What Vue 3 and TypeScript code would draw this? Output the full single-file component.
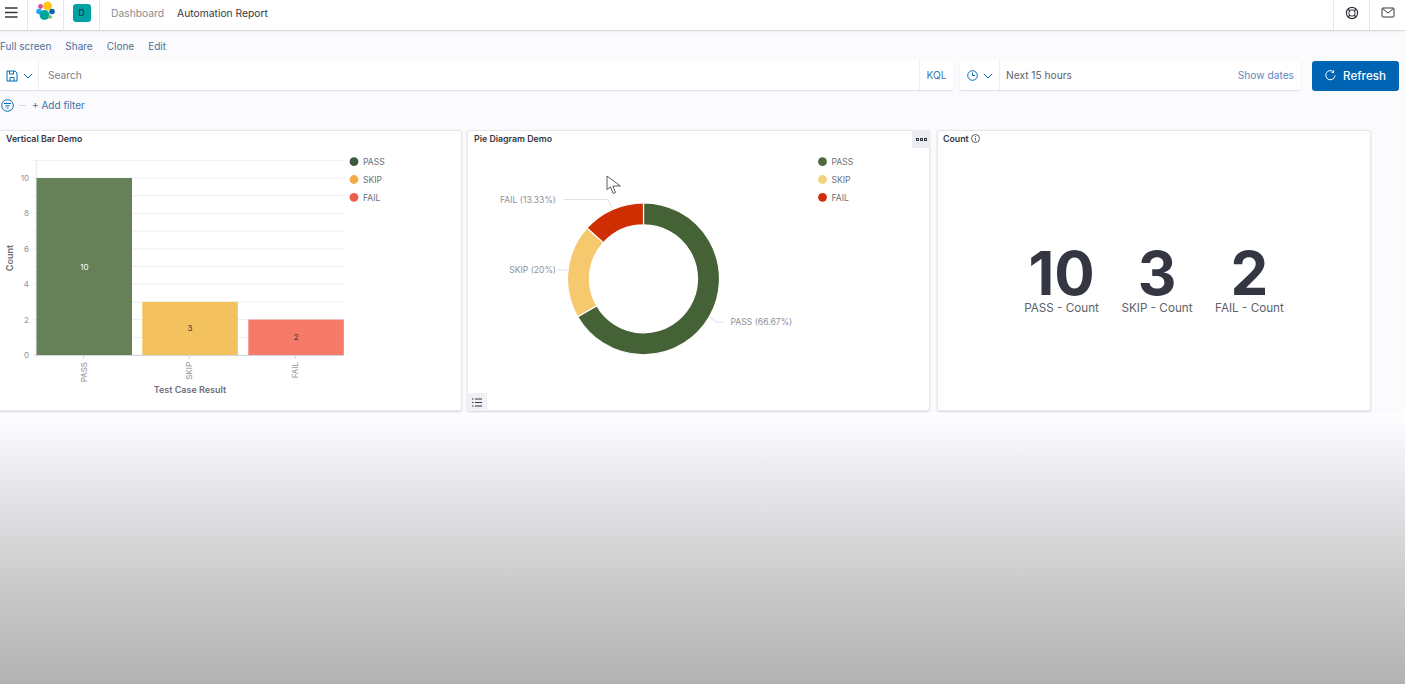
<script setup lang="ts">
const gridYs = Array.from({ length: 12 }, (_, i) => 355 - i * 17.7);
const ticks = [0, 2, 4, 6, 8, 10];

const bars = [
  { label: 'PASS', value: 10, x: 36.5, color: '#668058', text: '#ffffff' },
  { label: 'SKIP', value: 3, x: 142.3, color: '#f4c15f', text: '#343741' },
  { label: 'FAIL', value: 2, x: 248.3, color: '#f67a68', text: '#343741' },
];

const barLegend = [
  { label: 'PASS', color: '#3f5a3c' },
  { label: 'SKIP', color: '#f5ab45' },
  { label: 'FAIL', color: '#ec5f4f' },
];

const pieLegend = [
  { label: 'PASS', color: '#4e6840' },
  { label: 'SKIP', color: '#f3d27a' },
  { label: 'FAIL', color: '#cf2e08' },
];

const cx = 643.5;
const cy = 278.8;
const outer = 76;
const inner = 54;

const point = (r: number, a: number) => {
  const rad = (a * Math.PI) / 180;
  return `${(cx + r * Math.sin(rad)).toFixed(2)} ${(cy - r * Math.cos(rad)).toFixed(2)}`;
};

const slice = (from: number, to: number) => {
  const big = to - from > 180 ? 1 : 0;
  return `M${point(outer, from)} A${outer} ${outer} 0 ${big} 1 ${point(outer, to)} L${point(inner, to)} A${inner} ${inner} 0 ${big} 0 ${point(inner, from)} Z`;
};

const slices = [
  { d: slice(0, 240), color: '#446235' },
  { d: slice(240, 312), color: '#f6c96f' },
  { d: slice(312, 360), color: '#cf2e03' },
];

const metrics = [
  { value: '10', label: 'PASS - Count' },
  { value: '3', label: 'SKIP - Count' },
  { value: '2', label: 'FAIL - Count' },
];
</script>

<template>
  <div class="page">
    <header class="top-bar">
      <div class="cell menu-cell">
        <svg width="13" height="11" viewBox="0 0 13 11"><path d="M0 1h12.5M0 5.5h12.5M0 10h12.5" stroke="#343741" stroke-width="1.4" /></svg>
      </div>
      <div class="cell logo-cell">
        <svg width="24" height="24" viewBox="0 0 24 24">
          <circle cx="6.5" cy="5.5" r="2.4" fill="#e8478b" />
          <circle cx="13.5" cy="5" r="4.4" fill="#fec514" />
          <circle cx="5" cy="10.5" r="2.8" fill="#1ba9f5" />
          <circle cx="10.5" cy="14" r="5" fill="#00a69b" />
          <circle cx="18" cy="10.5" r="2.8" fill="#0b64a5" />
          <circle cx="16.2" cy="16" r="1.8" fill="#7dba5c" />
        </svg>
      </div>
      <div class="cell avatar-cell"><span class="avatar">D</span></div>
      <nav class="crumbs">
        <span class="crumb-link">Dashboard</span>
        <span class="crumb-current">Automation Report</span>
      </nav>
      <div class="cell right-cell">
        <svg width="14" height="14" viewBox="0 0 14 14" fill="none" stroke="#343741">
          <circle cx="7" cy="7" r="5.6" stroke-width="1.2" />
          <circle cx="7" cy="7" r="3.2" stroke-width="1" />
          <path d="M3 3l2 2M11 3L9 5M3 11l2-2M11 11L9 9" stroke-width="1.2" />
        </svg>
      </div>
      <div class="cell right-cell">
        <svg width="14" height="11" viewBox="0 0 14 11" fill="none" stroke="#343741"><rect x="1" y="1" width="12" height="9" rx="1" /><path d="M1.5 1.5L7 6l5.5-4.5" /></svg>
      </div>
    </header>

    <div class="actions">
      <a>Full screen</a>
      <a>Share</a>
      <a>Clone</a>
      <a>Edit</a>
    </div>

    <div class="query-row">
      <div class="search-box">
        <div class="saved-btn">
          <svg width="12" height="12" viewBox="0 0 12 12" fill="none" stroke="#006bb4"><path d="M1 1h8l2 2v8H1z" /><path d="M3.5 1v3h4V1M4 11V7.5h4V11" /></svg>
          <svg width="10" height="6" viewBox="0 0 10 6" fill="none" stroke="#006bb4"><path d="M.8.8L5 5l4.2-4.2" /></svg>
        </div>
        <span class="search-text">Search</span>
        <span class="kql">KQL</span>
      </div>
      <div class="date-box">
        <div class="clock-btn">
          <svg width="11" height="11" viewBox="0 0 11 11" fill="none" stroke="#006bb4"><circle cx="5.5" cy="5.5" r="4.8" /><path d="M5.5 2.5v3h2.6" /></svg>
          <svg width="10" height="6" viewBox="0 0 10 6" fill="none" stroke="#006bb4"><path d="M.8.8L5 5l4.2-4.2" /></svg>
        </div>
        <span class="date-text">Next 15 hours</span>
        <span class="show-dates">Show dates</span>
      </div>
      <button class="refresh">
        <svg width="11" height="11" viewBox="0 0 11 11" fill="none" stroke="#ffffff"><path d="M8.9 2.2A4.6 4.6 0 1 0 10 5.5" /><path d="M8.6.4v2.2H6.6" /></svg>
        <span>Refresh</span>
      </button>
    </div>

    <div class="filter-row">
      <svg width="13" height="13" viewBox="0 0 13 13" fill="none" stroke="#006bb4"><circle cx="6.5" cy="6.5" r="5.8" /><path d="M3 4.5h7M4.3 6.8h4.4M5.6 9h1.8" /></svg>
      <span class="filter-dash"></span>
      <span class="add-filter">+ Add filter</span>
    </div>

    <main class="panels">
      <section class="panel bar-panel">
        <h3 class="panel-title">Vertical Bar Demo</h3>
        <svg class="chart" viewBox="-2 148 463 262" width="463" height="262">
          <line v-for="y in gridYs" :key="y" x1="33" x2="345" :y1="y" :y2="y" stroke="#eceef2" />
          <line x1="36.3" x2="36.3" y1="160" y2="358" stroke="#e4e6eb" />
          <line x1="36" x2="344" y1="355.5" y2="355.5" stroke="#d3d6de" />
          <g v-for="t in ticks" :key="t">
            <text class="tick" x="29" :y="355 - t * 17.7 + 3" text-anchor="end">{{ t }}</text>
          </g>
          <text class="axis-title" transform="translate(13 258) rotate(-90)" text-anchor="middle">Count</text>
          <g v-for="b in bars" :key="b.label">
            <rect :x="b.x" :y="355 - b.value * 17.7" width="95.5" :height="b.value * 17.7" :fill="b.color" />
            <text class="bar-value" :x="b.x + 47.8" :y="355 - (b.value * 17.7) / 2 + 3" text-anchor="middle" :fill="b.text">{{ b.value }}</text>
            <line :x1="b.x + 47" :x2="b.x + 47" y1="355" y2="359" stroke="#d3d6de" />
            <text class="tick" :transform="`translate(${b.x + 50} 362) rotate(-90)`" text-anchor="end">{{ b.label }}</text>
          </g>
          <text class="axis-title" x="190" y="393" text-anchor="middle">Test Case Result</text>
          <g v-for="(l, i) in barLegend" :key="l.label">
            <circle cx="354" :cy="161.7 + i * 17.8" r="4.4" :fill="l.color" />
            <text class="legend" x="363" :y="165 + i * 17.8">{{ l.label }}</text>
          </g>
        </svg>
      </section>

      <section class="panel pie-panel">
        <h3 class="panel-title">Pie Diagram Demo</h3>
        <div class="panel-menu"><span></span><span></span><span></span></div>
        <svg class="chart" viewBox="467 148 462 262" width="462" height="262">
          <path v-for="s in slices" :key="s.color" :d="s.d" :fill="s.color" stroke="#ffffff" stroke-width="1.2" />
          <path d="M564 199.5h44l4 9M558 270h10M710 317l6 5h7" fill="none" stroke="#dfe1e6" />
          <text class="pie-label" x="556" y="203" text-anchor="end">FAIL (13.33%)</text>
          <text class="pie-label" x="556" y="273" text-anchor="end">SKIP (20%)</text>
          <text class="pie-label" x="730.5" y="325">PASS (66.67%)</text>
          <g v-for="(l, i) in pieLegend" :key="l.label">
            <circle cx="822.5" :cy="161.7 + i * 17.8" r="4.4" :fill="l.color" />
            <text class="legend" x="831.5" :y="165 + i * 17.8">{{ l.label }}</text>
          </g>
        </svg>
        <div class="list-btn">
          <svg width="10" height="9" viewBox="0 0 10 9" fill="none" stroke="#343741"><path d="M3 1h7M3 4.5h7M3 8h7M0 1h1.5M0 4.5h1.5M0 8h1.5" /></svg>
        </div>
      </section>

      <section class="panel count-panel">
        <h3 class="panel-title">
          Count
          <svg width="9" height="9" viewBox="0 0 9 9" fill="none" stroke="#343741" stroke-width=".8"><circle cx="4.5" cy="4.5" r="4" /><path d="M4.5 4v2.6M4.5 2.2v.9" /></svg>
        </h3>
        <div class="metrics">
          <div v-for="m in metrics" :key="m.label" class="metric">
            <div class="metric-value">{{ m.value }}</div>
            <div class="metric-label">{{ m.label }}</div>
          </div>
        </div>
      </section>
    </main>

    <svg class="cursor" width="16" height="21" viewBox="0 0 16 21"><path d="M1 1v13.5l3.5-2.6 2.6 6.6 2.4-1-2.6-6.4 7.4-.1z" fill="#ffffff" stroke="#343741" stroke-width=".8" /></svg>
  </div>
</template>

<style scoped>
.page {
  position: relative;
  height: 684px;
  overflow: hidden;
  font-family: Inter, "Liberation Sans", sans-serif;
  color: #343741;
  background: linear-gradient(180deg, #fbfbfe 0, #fbfbfe 411px, #fdfcfe 414px, #f8f7fb 433px, #e3e2e7 500px, #cfcfcf 567px, #bfbfbf 633px, #b2b2b2 684px);
}

.top-bar {
  display: flex;
  align-items: stretch;
  height: 30px;
  background: #fff;
  border-bottom: 1px solid #d8dae0;
  box-shadow: 0 1px 2px rgba(0, 0, 0, 0.06);
}

.cell {
  display: flex;
  align-items: center;
  justify-content: center;
  border-right: 1px solid #e4e6eb;
}

.menu-cell {
  width: 28px;
  padding-bottom: 5px;
  box-sizing: border-box;
  padding-right: 5px;
}

.logo-cell {
  width: 35px;
  padding-bottom: 5px;
}

.avatar-cell {
  width: 35px;
  padding-bottom: 5px;
}

.avatar {
  width: 18px;
  height: 18px;
  border-radius: 3px;
  background: #00a3a3;
  color: #0d3a5a;
  font-size: 9px;
  font-weight: 500;
  line-height: 18px;
  text-align: center;
}

.crumbs {
  flex: 1;
  display: flex;
  gap: 13px;
  padding: 7px 0 0 11px;
  font-size: 10.3px;
}

.crumb-link {
  color: #8a8d96;
}

.crumb-current {
  color: #343741;
}

.right-cell {
  width: 35px;
  padding-bottom: 5px;
  border-right: 0;
  border-left: 1px solid #e4e6eb;
}

.actions {
  display: flex;
  gap: 14px;
  height: 30px;
  align-items: center;
  font-size: 10px;
  color: #4a7099;
}

.query-row {
  display: flex;
  height: 30px;
}

.search-box,
.date-box {
  display: flex;
  align-items: center;
  height: 29px;
  background: #fff;
  border-radius: 2px;
  box-shadow: 0 1px 1px rgba(60, 66, 90, 0.14);
  font-size: 10.2px;
}

.search-box {
  width: 953px;
}

.saved-btn {
  display: flex;
  align-items: center;
  justify-content: center;
  gap: 5px;
  width: 39px;
  height: 100%;
  border-right: 1px solid #eceef2;
  box-sizing: border-box;
}

.search-text {
  flex: 1;
  padding: 0 0 1px 9px;
  color: #7d8089;
}

.kql {
  width: 33px;
  line-height: 28px;
  padding-bottom: 1px;
  text-align: center;
  color: #3b79b8;
  border-left: 1px solid #eceef2;
}

.date-box {
  width: 340px;
  margin-left: 7px;
}

.clock-btn {
  display: flex;
  align-items: center;
  justify-content: center;
  gap: 5px;
  width: 40px;
  height: 100%;
  border-right: 1px solid #eceef2;
  box-sizing: border-box;
}

.date-text {
  flex: 1;
  padding: 0 0 1px 6px;
  color: #5e6169;
}

.show-dates {
  padding: 0 6px 1px 0;
  color: #5b87c0;
}

.refresh {
  display: flex;
  align-items: center;
  justify-content: center;
  gap: 7px;
  width: 87px;
  height: 30px;
  margin-left: 12px;
  padding: 0 0 1px;
  border: 0;
  border-radius: 3px;
  background: #0064b4;
  color: #fff;
  font-family: inherit;
  font-size: 11.6px;
  font-weight: 500;
}

.filter-row {
  display: flex;
  align-items: center;
  height: 28px;
  padding-left: 1px;
  font-size: 10px;
  color: #3f6fa5;
}

.filter-dash {
  width: 7px;
  height: 1px;
  margin: 0 6px 0 5px;
  background: #d8dae0;
}

.panels {
  display: flex;
  margin: 11px 0 0 -2px;
  height: 281px;
}

.panel {
  position: relative;
  box-sizing: border-box;
  background: #fff;
  border-radius: 3px;
  box-shadow: inset 0 0 0 1px #e6e7ec, 0 1px 2px rgba(60, 66, 90, 0.2);
}

.bar-panel {
  width: 464px;
  padding-left: 8px;
}

.pie-panel {
  width: 463px;
  margin-left: 5px;
  padding-left: 7px;
}

.count-panel {
  display: flex;
  flex-direction: column;
  width: 434px;
  margin-left: 7px;
  padding-left: 6px;
}

.panel-title {
  display: flex;
  align-items: center;
  gap: 2px;
  height: 16px;
  margin: 0 0 2px;
  font-size: 8.8px;
  font-weight: 600;
  color: #343741;
}

.chart {
  display: block;
  margin-left: -8px;
}

.pie-panel .chart {
  margin-left: -7px;
}

.chart text {
  font-family: Inter, "Liberation Sans", sans-serif;
}

.tick {
  font-size: 8px;
  fill: #8e9199;
}

.axis-title {
  font-size: 9px;
  font-weight: 600;
  fill: #6e7078;
}

.bar-value {
  font-size: 8px;
}

.legend {
  font-size: 8.6px;
  fill: #6e7078;
}

.pie-label {
  font-size: 8.6px;
  fill: #8f8f96;
}

.panel-menu {
  position: absolute;
  top: 0;
  right: 0;
  display: flex;
  align-items: center;
  justify-content: center;
  gap: 1px;
  width: 18px;
  height: 18px;
  background: #eceef1;
}

.panel-menu span {
  width: 3px;
  height: 3px;
  border: 0.7px solid #343741;
  box-sizing: border-box;
}

.list-btn {
  position: absolute;
  left: 0;
  bottom: 0;
  display: flex;
  align-items: center;
  justify-content: center;
  width: 20px;
  height: 18px;
  background: #f0f1f4;
}

.metrics {
  display: flex;
  justify-content: center;
  gap: 22.5px;
  margin: 97px 0 0 -6px;
}

.metric {
  display: flex;
  flex-direction: column;
  align-items: center;
}

.metric-value {
  font-size: 60px;
  font-weight: 700;
  line-height: 56px;
  color: #343741;
}

.metric-label {
  font-size: 11.7px;
  line-height: 14px;
  color: #5e6169;
}

.cursor {
  position: absolute;
  left: 605.5px;
  top: 175px;
}
</style>

<style>
html,
body {
  margin: 0;
}
</style>
